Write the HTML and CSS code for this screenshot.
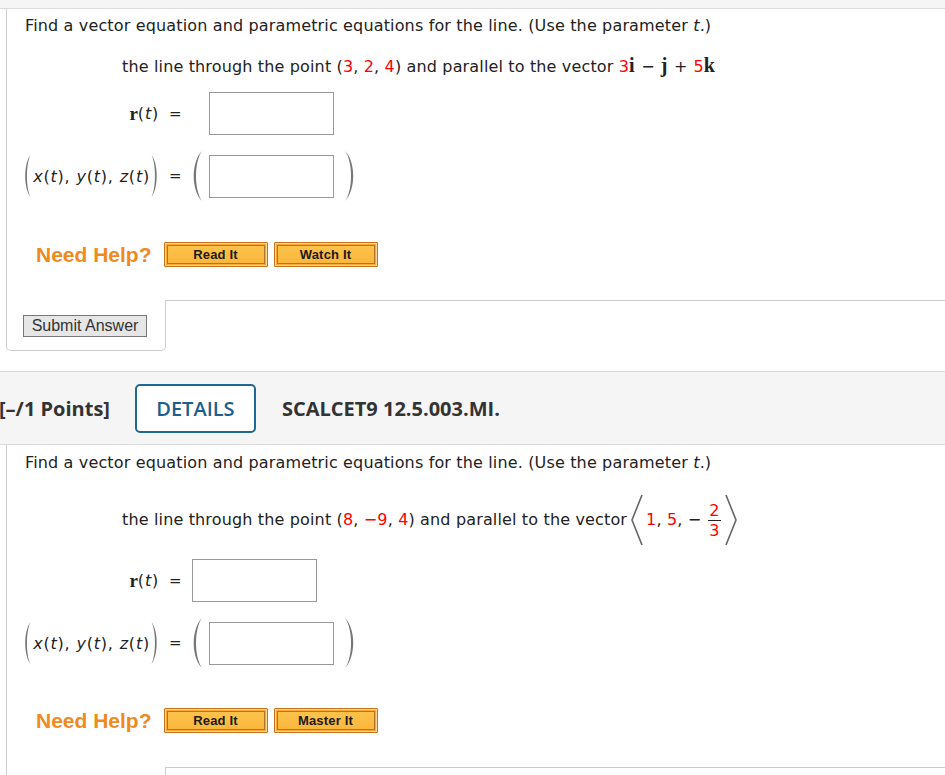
FILE: index.html
```html
<!DOCTYPE html>
<html>
<head>
<meta charset="utf-8">
<link rel="stylesheet" href="styles.css">
</head>
<body>
<div class="topbar"></div>

<section class="card">
  <div class="qbody q1">
    <p class="prompt">Find a vector equation and parametric equations for the line. (Use the parameter <i>t</i>.)</p>
    <p class="given">the line through the point (<span class="red">3</span>, <span class="red">2</span>, <span class="red">4</span>) and parallel to the vector <span class="red">3</span><b class="vec vec-lg">i</b><span class="op">−</span><b class="vec vec-lg">j</b><span class="op">+</span><span class="red">5</span><b class="vec vec-lg">k</b></p>
    <div class="eqs">
      <div class="lbl"><b class="vec">r</b>(<i>t</i>)</div>
      <div class="eq">=</div>
      <div class="cell"><span class="box box-wide"></span></div>

      <div class="lbl">
        <svg class="lp" width="8" height="44" viewBox="0 0 8 44"><path d="M7.5 1 C0.5 10 0.5 34 7.5 43 C2.8 34 2.8 10 7.5 1Z"/></svg>
        <span class="tuple"><i>x</i>(<i>t</i>), <i>y</i>(<i>t</i>), <i>z</i>(<i>t</i>)</span>
        <svg class="lp" width="8" height="44" viewBox="0 0 8 44"><path d="M0.5 1 C7.5 10 7.5 34 0.5 43 C5.2 34 5.2 10 0.5 1Z"/></svg>
      </div>
      <div class="eq">=</div>
      <div class="cell">
        <svg class="bp" width="14" height="52" viewBox="0 0 14 52"><path d="M12 1 C1 12 1 40 12 51 C4 40 4 12 12 1Z"/></svg>
        <span class="box"></span>
        <svg class="bp bp-r" width="14" height="52" viewBox="0 0 14 52"><path d="M2 1 C13 12 13 40 2 51 C10 40 10 12 2 1Z"/></svg>
      </div>
    </div>
    <div class="help">
      <span class="need">Need Help?</span>
      <button class="obtn">Read It</button>
      <button class="obtn">Watch It</button>
    </div>
  </div>
  <div class="footer">
    <div class="submit-wrap"><button class="submit">Submit Answer</button></div>
    <div class="footer-rest"></div>
  </div>
</section>

<header class="qhead">
  <span class="points">[–/1 Points]</span>
  <button class="details">DETAILS</button>
  <span class="qid">SCALCET9 12.5.003.MI.</span>
</header>

<section class="card">
  <div class="qbody q2">
    <p class="prompt">Find a vector equation and parametric equations for the line. (Use the parameter <i>t</i>.)</p>
    <div class="given given-tall">
      <span>the line through the point (<span class="red">8</span>, <span class="red">−9</span>, <span class="red">4</span>) and parallel to the vector</span>
      <svg class="ang" width="16" height="52" viewBox="0 0 16 52"><polyline points="13,1 3,26 13,51"/></svg>
      <span><span class="red">1</span>, <span class="red">5</span>, −</span>
      <span class="frac"><span class="red">2</span><span class="red den">3</span></span>
      <svg class="ang" width="16" height="52" viewBox="0 0 16 52"><polyline points="3,1 13,26 3,51"/></svg>
    </div>
    <div class="eqs">
      <div class="lbl"><b class="vec">r</b>(<i>t</i>)</div>
      <div class="eq">=</div>
      <div class="cell"><span class="box box-near"></span></div>

      <div class="lbl">
        <svg class="lp" width="8" height="44" viewBox="0 0 8 44"><path d="M7.5 1 C0.5 10 0.5 34 7.5 43 C2.8 34 2.8 10 7.5 1Z"/></svg>
        <span class="tuple"><i>x</i>(<i>t</i>), <i>y</i>(<i>t</i>), <i>z</i>(<i>t</i>)</span>
        <svg class="lp" width="8" height="44" viewBox="0 0 8 44"><path d="M0.5 1 C7.5 10 7.5 34 0.5 43 C5.2 34 5.2 10 0.5 1Z"/></svg>
      </div>
      <div class="eq">=</div>
      <div class="cell">
        <svg class="bp" width="14" height="52" viewBox="0 0 14 52"><path d="M12 1 C1 12 1 40 12 51 C4 40 4 12 12 1Z"/></svg>
        <span class="box"></span>
        <svg class="bp bp-r" width="14" height="52" viewBox="0 0 14 52"><path d="M2 1 C13 12 13 40 2 51 C10 40 10 12 2 1Z"/></svg>
      </div>
    </div>
    <div class="help">
      <span class="need">Need Help?</span>
      <button class="obtn">Read It</button>
      <button class="obtn">Master It</button>
    </div>
  </div>
  <div class="footer">
    <div class="submit-wrap submit-empty"></div>
    <div class="footer-rest"></div>
  </div>
</section>
</body>
</html>
```

FILE: styles.css
```css
* { box-sizing: border-box; }
html, body { margin: 0; padding: 0; background: #fff; }
body {
  width: 945px;
  height: 775px;
  overflow: hidden;
  font-family: "DejaVu Sans", Verdana, sans-serif;
  font-size: 16px;
  letter-spacing: 0.15px;
  color: #222;
}
.topbar {
  height: 9px;
  background: #f5f5f5;
  border-bottom: 1px solid #ddd;
}
.card { margin-left: 6px; }
.qbody {
  border-left: 1px solid #ccc;
  padding-left: 18px;
}
.q1 { padding-top: 7px; padding-bottom: 33px; }
.q2 { padding-top: 8px; padding-bottom: 34px; }
.prompt { margin: 0; line-height: 20px; }
.given {
  margin: 21px 0 0 97px;
  line-height: 20px;
}
.op { padding: 0 6px; }
.given-tall {
  display: flex;
  align-items: center;
  height: 52px;
  margin-top: 21px;
  white-space: pre;
}
.red { color: #f00; }
.vec {
  font-family: "Liberation Serif", "Times New Roman", serif;
  font-weight: bold;
  font-size: 18px;
  line-height: 14px;
  letter-spacing: 0;
}
.vec-lg { font-size: 20px; letter-spacing: 0.5px; }
i { font-style: italic; }

.ang { display: block; margin: 0 1px 0 2px; }
.ang polyline { fill: none; stroke: #666; stroke-width: 1.6; }
.frac {
  display: inline-flex;
  flex-direction: column;
  align-items: center;
  font-size: 16px;
  line-height: 19px;
  margin-left: 7px;
}
.frac .den { border-top: 1px solid #222; padding: 0 1px; }

.eqs {
  display: grid;
  grid-template-columns: 134px 27px auto;
  row-gap: 15px;
  margin-top: 15px;
  align-items: center;
  justify-items: start;
}
.q2 .eqs { margin-top: 13px; }
.lbl {
  justify-self: end;
  display: flex;
  align-items: center;
  white-space: pre;
  font-size: 16px;
  letter-spacing: 0.8px;
}
.lbl .vec { font-size: 19px; }
.tuple { padding: 0 1px 0 2px; }
.lp { display: block; }
.lp path, .bp path { fill: #777; }
.eq { padding-left: 10px; font-size: 15px; }
.cell { display: flex; align-items: center; }
.box {
  display: block;
  width: 125px;
  height: 43px;
  border: 1px solid #999;
  background: #fff;
}
.box-wide { margin-left: 23px; }
.box-near { margin-left: 6px; }
.bp { display: block; margin-left: 4px; margin-right: 5px; }
.bp-r { margin-left: 9px; }

.help {
  display: flex;
  align-items: center;
  margin-top: 40px;
  padding-left: 11px;
  height: 25px;
  letter-spacing: 0;
}
.q2 .help { margin-top: 39px; }
.need {
  font-family: "Liberation Sans", Arial, sans-serif;
  font-weight: bold;
  font-size: 21px;
  color: #f08a1e;
  margin-right: 12px;
}
.obtn {
  width: 104px;
  height: 25px;
  margin: 0 6px 0 0;
  padding: 0;
  font-family: "Liberation Sans", Arial, sans-serif;
  font-weight: bold;
  font-size: 13px;
  letter-spacing: 0.2px;
  color: #1a1a1a;
  background: linear-gradient(#fdc44e, #fbb53a);
  border: 1px solid #c9721a;
  box-shadow: inset 0 0 0 1px #fbd68e, inset 0 0 0 2px #f6a93a, inset 0 0 0 3px #b2742c;
  border-radius: 1px;
}

.footer { display: flex; align-items: flex-start; }
.submit-wrap {
  width: 160px;
  height: 51px;
  border: 1px solid #ccc;
  border-top: none;
  border-radius: 0 0 5px 5px;
  padding: 15px 0 0 16px;
}
.submit-empty { height: 7px; border-bottom: none; }
.footer-rest { flex: 1; border-top: 1px solid #ccc; }
.submit {
  width: 124px;
  height: 22px;
  padding: 0;
  font-family: "Liberation Sans", Arial, sans-serif;
  font-size: 16px;
  letter-spacing: 0;
  color: #333;
  background: #e6e6e6;
  border: 1px solid #777;
  border-radius: 0;
}

.qhead {
  margin-top: 20px;
  height: 74px;
  background: #f5f5f5;
  border-top: 1px solid #ddd;
  border-bottom: 1px solid #ddd;
  display: flex;
  align-items: center;
  font-family: "Open Sans", sans-serif;
  font-size: 20px;
  letter-spacing: 0;
  color: #333;
}
.points { font-weight: bold; margin-left: -1px; }
.details {
  margin: 0 26px 0 25px;
  width: 121px;
  height: 49px;
  padding: 0;
  background: #fff;
  border: 2px solid #1f6896;
  border-radius: 5px;
  font-family: "Open Sans", sans-serif;
  font-size: 20px;
  font-weight: 600;
  color: #1c5f8c;
}
.qid { font-weight: bold; }
```
